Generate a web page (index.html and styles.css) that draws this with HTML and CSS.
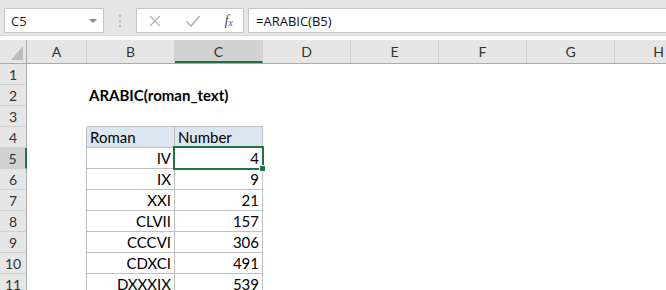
FILE: index.html
```html
<!DOCTYPE html>
<html lang="en">
<head>
    <meta charset="UTF-8">
    <title>ARABIC function</title>
    <link rel="stylesheet" href="styles.css">
</head>
<body>
    <div class="toolbar">
        <div class="namebox">
            <span>C5</span>
            <span class="arrow"></span>
        </div>
        <div class="grip"><i></i><i></i><i></i></div>
        <div class="buttons">
            <svg class="btn" width="14" height="14" viewBox="0 0 14 14"><path d="M2 2 L12 12 M12 2 L2 12" stroke="#b4b4b4" stroke-width="1.4" fill="none"/></svg>
            <svg class="btn" width="16" height="14" viewBox="0 0 16 14"><path d="M1.5 7.5 L6 12 L14.5 2" stroke="#b4b4b4" stroke-width="1.6" fill="none"/></svg>
            <span class="fx"><i>f</i><sub>x</sub></span>
        </div>
        <div class="formula">=ARABIC(B5)</div>
    </div>

    <div class="sheet">
        <div class="row head">
            <div class="rh corner"><span class="tri"></span></div>
            <div class="ch ca">A</div>
            <div class="ch cb">B</div>
            <div class="ch cc sel">C</div>
            <div class="ch cd">D</div>
            <div class="ch cd">E</div>
            <div class="ch cd">F</div>
            <div class="ch cd">G</div>
            <div class="ch cd">H</div>
        </div>

        <div class="row"><div class="rh">1</div></div>
        <div class="row">
            <div class="rh">2</div>
            <div class="cell ca"></div>
            <div class="cell cb title">ARABIC(roman_text)</div>
        </div>
        <div class="row">
            <div class="rh">3</div>
            <div class="cell ca"></div>
            <div class="cell cb top"></div>
            <div class="cell cc top"></div>
        </div>
        <div class="row">
            <div class="rh">4</div>
            <div class="cell ca edge"></div>
            <div class="cell cb t th">Roman</div>
            <div class="cell cc t th">Number</div>
        </div>
        <div class="row">
            <div class="rh on">5</div>
            <div class="cell ca edge"></div>
            <div class="cell cb t">IV</div>
            <div class="cell cc t active">4</div>
        </div>
        <div class="row">
            <div class="rh">6</div>
            <div class="cell ca edge"></div>
            <div class="cell cb t">IX</div>
            <div class="cell cc t">9</div>
        </div>
        <div class="row">
            <div class="rh">7</div>
            <div class="cell ca edge"></div>
            <div class="cell cb t">XXI</div>
            <div class="cell cc t">21</div>
        </div>
        <div class="row">
            <div class="rh">8</div>
            <div class="cell ca edge"></div>
            <div class="cell cb t">CLVII</div>
            <div class="cell cc t">157</div>
        </div>
        <div class="row">
            <div class="rh">9</div>
            <div class="cell ca edge"></div>
            <div class="cell cb t">CCCVI</div>
            <div class="cell cc t">306</div>
        </div>
        <div class="row">
            <div class="rh">10</div>
            <div class="cell ca edge"></div>
            <div class="cell cb t">CDXCI</div>
            <div class="cell cc t">491</div>
        </div>
        <div class="row">
            <div class="rh">11</div>
            <div class="cell ca edge"></div>
            <div class="cell cb t">DXXXIX</div>
            <div class="cell cc t">539</div>
        </div>
    </div>
</body>
</html>
```

FILE: styles.css
```css
body {
    margin: 0;
    width: 666px;
    height: 290px;
    overflow: hidden;
    background-color: white;
    font-family: Lato, "Liberation Sans", sans-serif;
}

/* formula bar area */

.toolbar {
    display: flex;
    align-items: center;
    padding: 8px 0 2px 4px;
    background-color: #e6e6e6;
    border-bottom: 1px solid #dadada;
}

.namebox, .buttons, .formula {
    height: 25px;
    box-sizing: border-box;
    background-color: white;
    border: 1px solid #c6c6c6;
    display: flex;
    align-items: center;
}

.namebox {
    width: 100px;
    padding: 0 6px 0 6px;
    justify-content: space-between;
    font-family: "Open Sans", sans-serif;
    font-size: 13px;
    color: #222;
}

.arrow {
    width: 0;
    height: 0;
    border-left: 4px solid transparent;
    border-right: 4px solid transparent;
    border-top: 4px solid #8a8a8a;
}

.grip {
    width: 32px;
    display: flex;
    flex-direction: column;
    align-items: center;
    gap: 3px;
}

.grip i {
    width: 2px;
    height: 2px;
    background-color: #b8b8b8;
}

.buttons {
    width: 108px;
    padding: 0 10px 0 11px;
    justify-content: space-between;
}

.fx {
    font-family: "Liberation Serif", serif;
    font-size: 15px;
    color: #555;
}

.fx sub {
    font-size: 10px;
    font-style: italic;
    vertical-align: -1px;
}

.formula {
    flex: 1;
    margin-left: 4px;
    padding-left: 7px;
    border-right: none;
    font-family: "Open Sans", sans-serif;
    font-size: 13px;
    color: #111;
}

/* sheet */

.sheet {
    padding-top: 4px;
}

.row {
    display: flex;
    height: 21px;
}

.row.head {
    height: 24px;
    background-color: #e6e6e6;
    border-bottom: 1px solid #ababab;
    box-sizing: border-box;
}

.rh {
    flex: none;
    width: 27px;
    box-sizing: border-box;
    background-color: #e6e6e6;
    border-right: 1px solid #ababab;
    border-bottom: 1px solid #d0d0d0;
    text-align: center;
    line-height: 21px;
    font-size: 14px;
    color: #333;
}

.rh.on {
    background-color: #d2d2d2;
    border-right: 2px solid #217346;
}

.corner {
    position: relative;
    border-bottom: none;
}

.tri {
    position: absolute;
    right: 3px;
    bottom: 3px;
    width: 0;
    height: 0;
    border-left: 12px solid transparent;
    border-bottom: 14px solid #bcbcbc;
}

.ch {
    flex: none;
    box-sizing: border-box;
    border-right: 1px solid #d0d0d0;
    text-align: center;
    line-height: 24px;
    font-size: 14px;
    color: #333;
}

.ch.sel {
    background-color: #d2d2d2;
    border-bottom: 2px solid #217346;
}

.ca {
    width: 60px;
}

.cb, .cc, .cd {
    width: 88px;
}

.cell {
    flex: none;
    box-sizing: border-box;
    line-height: 21px;
    font-size: 15px;
    color: #000;
    padding: 0 3px;
    text-align: right;
    white-space: nowrap;
}

.cell.title {
    text-align: left;
    font-weight: bold;
    padding-left: 2px;
}

.cell.top {
    border-bottom: 1px solid #bfbfbf;
}

.cell.edge {
    border-right: 1px solid #bfbfbf;
}

.cell.t {
    border-right: 1px solid #bfbfbf;
    border-bottom: 1px solid #bfbfbf;
}

.cell.th {
    background-color: #dce6f1;
    text-align: left;
}

.cell.active {
    position: relative;
}

.cell.active::before {
    content: "";
    position: absolute;
    left: -2px;
    top: -2px;
    right: -2px;
    bottom: -2px;
    border: 2px solid #217346;
}

.cell.active::after {
    content: "";
    position: absolute;
    right: -4px;
    bottom: -4px;
    width: 5px;
    height: 5px;
    background-color: #217346;
    border: 1px solid white;
}
```
